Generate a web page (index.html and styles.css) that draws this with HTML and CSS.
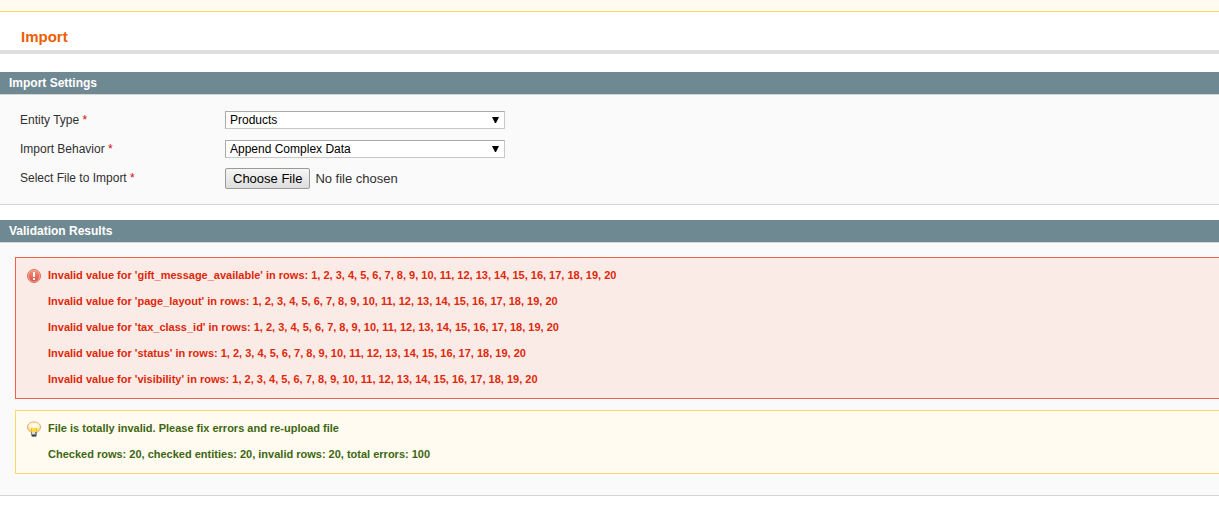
FILE: index.html
```html
<!DOCTYPE html>
<html lang="en">
<head>
    <meta charset="UTF-8">
    <meta name="viewport" content="width=device-width, initial-scale=1.0">
    <title>Import</title>
    <link rel="stylesheet" href="styles.css">
</head>
<body>

    <div class="notification-bar"></div>

    <main>
        <header class="content-header">
            <h1>Import</h1>
        </header>

        <form action="#" method="post" enctype="multipart/form-data">
            <section class="entry-edit">
                <h2>Import Settings</h2>
                <div class="fieldset form-list">
                    <div class="form-row">
                        <label for="entity">Entity Type <span class="required">*</span></label>
                        <select name="entity" id="entity">
                            <option>Products</option>
                        </select>
                    </div>
                    <div class="form-row">
                        <label for="behavior">Import Behavior <span class="required">*</span></label>
                        <select name="behavior" id="behavior">
                            <option>Append Complex Data</option>
                        </select>
                    </div>
                    <div class="form-row">
                        <label for="import_file">Select File to Import <span class="required">*</span></label>
                        <input type="file" name="import_file" id="import_file">
                    </div>
                </div>
            </section>
        </form>

        <section class="entry-edit">
            <h2>Validation Results</h2>
            <div class="fieldset messages">
                <div class="message error">
                    <svg class="icon" viewBox="0 0 16 16" width="16" height="16" aria-hidden="true">
                        <defs>
                            <linearGradient id="red" x1="0" y1="0" x2="0" y2="1">
                                <stop offset="0" stop-color="#f78f76"/>
                                <stop offset="1" stop-color="#d9544a"/>
                            </linearGradient>
                        </defs>
                        <circle cx="8" cy="8" r="6.5" fill="#f9c3b6" stroke="#dc6a5c"/>
                        <circle cx="8" cy="8" r="5.5" fill="url(#red)"/>
                        <path d="M7 4h2v5H7zM7 10h2v2H7z" fill="#fff"/>
                    </svg>
                    <ul>
                        <li>Invalid value for 'gift_message_available' in rows: 1, 2, 3, 4, 5, 6, 7, 8, 9, 10, 11, 12, 13, 14, 15, 16, 17, 18, 19, 20</li>
                        <li>Invalid value for 'page_layout' in rows: 1, 2, 3, 4, 5, 6, 7, 8, 9, 10, 11, 12, 13, 14, 15, 16, 17, 18, 19, 20</li>
                        <li>Invalid value for 'tax_class_id' in rows: 1, 2, 3, 4, 5, 6, 7, 8, 9, 10, 11, 12, 13, 14, 15, 16, 17, 18, 19, 20</li>
                        <li>Invalid value for 'status' in rows: 1, 2, 3, 4, 5, 6, 7, 8, 9, 10, 11, 12, 13, 14, 15, 16, 17, 18, 19, 20</li>
                        <li>Invalid value for 'visibility' in rows: 1, 2, 3, 4, 5, 6, 7, 8, 9, 10, 11, 12, 13, 14, 15, 16, 17, 18, 19, 20</li>
                    </ul>
                </div>
                <div class="message notice">
                    <svg class="icon" viewBox="0 0 16 16" width="16" height="16" aria-hidden="true">
                        <defs>
                            <radialGradient id="glow" cx=".5" cy=".3" r=".65">
                                <stop offset="0" stop-color="#fffef6"/>
                                <stop offset=".6" stop-color="#fff2c4"/>
                                <stop offset="1" stop-color="#fad56c"/>
                            </radialGradient>
                        </defs>
                        <path d="M5 11.5C4.5 10.5 1.5 9.5 1.5 6 1.5 3 4.4 1 8 1s6.5 2 6.5 5c0 3.500-3 4.500-3.500 5.500z" fill="url(#glow)" stroke="#e3ab6c"/>
                        <path d="M5 7h6v4H5z" fill="#fbdc45"/>
                        <path d="M5.5 7v4M10.5 7v4" stroke="#eeb53a" fill="none"/>
                        <path d="M5 11h6v3l-1 2H6l-1-2z" fill="#858585"/>
                        <path d="M6 11h3v2H6z" fill="#dcdcdc"/>
                        <path d="M6 14h4v1H6z" fill="#3c3c3c"/>
                    </svg>
                    <ul>
                        <li>File is totally invalid. Please fix errors and re-upload file</li>
                        <li>Checked rows: 20, checked entities: 20, invalid rows: 20, total errors: 100</li>
                    </ul>
                </div>
            </div>
        </section>
    </main>

</body>
</html>
```
FILE: styles.css
```css
* {
    box-sizing: border-box;
}

body {
    margin: 0;
    background: #fff;
    color: #2f2f2f;
    font-family: Arial, "Liberation Sans", sans-serif;
    font-size: 12px;
    line-height: 16px;
}

.notification-bar {
    height: 12px;
    background: #fffbf0;
    border-bottom: 1px solid #ffd967;
}

/* Page title */
.content-header {
    margin-bottom: 18px;
    padding: 16px 21px 4px;
    border-bottom: 4px solid #dfdfdf;
}

h1 {
    margin: 0;
    color: #eb5e00;
    font-size: 15px;
    line-height: 18px;
}

/* Boxes */
.entry-edit {
    margin-bottom: 15px;
}

h2 {
    margin: 0;
    padding: 3px 9px;
    background: #6f8992;
    color: #fff;
    font-size: 12px;
    line-height: 16px;
}

.fieldset {
    background: #fafafa;
    border: solid #d6d6d6;
    border-width: 1px 0;
}

/* Form */
.form-list {
    display: flex;
    flex-direction: column;
    gap: 11px;
    padding: 16px 20px 15px;
}

.form-row {
    display: grid;
    grid-template-columns: 205px 1fr;
    align-items: start;
}

label {
    line-height: 18px;
}

.required {
    color: #d40707;
}

select {
    appearance: none;
    width: 280px;
    height: 18px;
    padding: 0 4px;
    border: 1px solid #aaa;
    border-bottom-color: #c8c8c8;
    border-right-color: #c8c8c8;
    border-radius: 0;
    background: #fff url("data:image/svg+xml,%3Csvg xmlns='http://www.w3.org/2000/svg' width='7' height='6'%3E%3Cpath d='M0 0h7L4 6H3z'/%3E%3C/svg%3E") no-repeat right 5px center;
    color: #000;
    font: inherit;
}

input[type="file"] {
    height: 21px;
    margin-top: -1px;
    font-family: inherit;
    font-size: 13px;
    line-height: 15px;
}

input[type="file"]::file-selector-button {
    height: 21px;
    margin: 0 5px 0 0;
    padding: 1px 7px;
    border: 1px solid #999;
    border-radius: 2px;
    background: linear-gradient(#f6f6f6, #dddddd);
    color: #000;
    font: inherit;
}

/* Messages */
.messages {
    display: flex;
    flex-direction: column;
    gap: 11px;
    padding: 14px 0 21px 15px;
}

.message {
    display: flex;
    gap: 6px;
    padding: 9px 10px 11px;
    border: 1px solid;
    border-right: 0;
    font-size: 11px;
    font-weight: bold;
}

.message ul {
    display: flex;
    flex-direction: column;
    gap: 10px;
    margin: 0;
    padding: 0;
    list-style: none;
}

.icon {
    flex: none;
    margin-top: 1px;
}

.error {
    border-color: #f16048;
    background: #faebe7;
    color: #df280a;
}

.notice {
    border-color: #ffd967;
    background: #fffbf0;
    color: #3d6611;
}
```
